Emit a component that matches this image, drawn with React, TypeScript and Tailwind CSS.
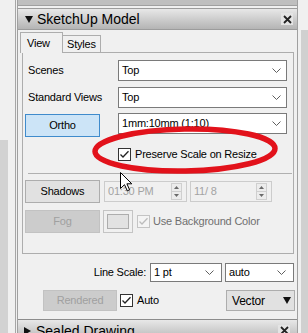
import React from "react";

const Chevron = () => (
  <svg width="9" height="5" viewBox="0 0 9 5">
    <path d="M0.5 0.5 L4.5 4.5 L8.5 0.5" fill="none" stroke="#5f5f5f" />
  </svg>
);

function Select({ value, className }: { value: string; className: string }) {
  return (
    <div className={"flex items-center justify-between bg-white border border-[#7a7a7a] pl-[3px] pr-[5px] " + className}>
      <span>{value}</span>
      <Chevron />
    </div>
  );
}

function Check({ disabled }: { disabled?: boolean }) {
  const c = disabled ? "#bcbcbc" : "#222";
  return (
    <svg width="13" height="13" viewBox="0 0 13 13" className="shrink-0">
      <rect x="0.5" y="0.5" width="12" height="12" fill={disabled ? "#f4f4f4" : "#fff"} stroke={disabled ? "#c4c4c4" : "#333"} />
      <path d="M2.5 6.5 L5 9 L10.5 3.2" fill="none" stroke={c} strokeWidth="1.3" />
    </svg>
  );
}

function Spin({ value, className }: { value: string; className: string }) {
  return (
    <div className={"flex items-center justify-between border border-[#cccccc] bg-[#f0f0f0] text-[#a3a3a3] pl-[3px] pr-[4px] " + className}>
      <span>{value}</span>
      <div className="w-[11px] h-[17px] border border-[#cfcfcf] bg-[#ececec] flex flex-col">
        <div className="flex-1 flex items-center justify-center border-b border-[#cfcfcf]">
          <svg width="5" height="3" viewBox="0 0 5 3"><path d="M0 3 L2.5 0 L5 3 Z" fill="#6a6a6a" /></svg>
        </div>
        <div className="flex-1 flex items-center justify-center">
          <svg width="5" height="3" viewBox="0 0 5 3"><path d="M0 0 L2.5 3 L5 0 Z" fill="#6a6a6a" /></svg>
        </div>
      </div>
    </div>
  );
}

function CloseBox() {
  return (
    <div className="w-[12px] h-[12px] bg-[#e4e4e4] flex items-center justify-center">
      <svg width="9" height="9" viewBox="0 0 9 9">
        <path d="M1 1 L8 8 M8 1 L1 8" stroke="#222" strokeWidth="1.8" />
      </svg>
    </div>
  );
}

export default function App() {
  return (
    <div className="w-[308px] h-[333px] bg-[#f0f0f0] flex overflow-hidden relative font-['Liberation_Sans',Arial,sans-serif] text-[11px] tracking-[-0.2px] text-black leading-none">
      {/* left strip */}
      <div className="w-[15px] flex flex-col">
        <div className="h-[140px] shrink-0" />
        <div className="flex-1 w-[8px] bg-[#d2d2d2]" />
      </div>
      <div className="w-px bg-[#a6a6a6]" />
      <div className="w-px" />

      {/* panel */}
      <div className="w-[281px] flex flex-col border-x border-[#a0a0a0] overflow-hidden">
        <div className="h-[6px] shrink-0 bg-[#bfbfbf] border-b border-[#a0a0a0]" />
        <div className="h-[2px] shrink-0" />

        {/* header */}
        <div className="h-[22px] shrink-0 flex items-center bg-linear-to-b from-[#e8e8e8] to-[#b4b4b4] border-y border-[#9c9c9c]">
          <svg width="8" height="7" viewBox="0 0 8 7" className="ml-[7px]">
            <path d="M0 0 L8 0 L4 7 Z" fill="#111" />
          </svg>
          <span className="ml-[4px] text-[14px] tracking-normal">SketchUp Model</span>
          <div className="ml-auto mr-[4px]">
            <CloseBox />
          </div>
        </div>

        {/* tabs */}
        <div className="flex items-end h-[20px] shrink-0 mt-[2px] ml-[2px] relative z-10">
          <div className="w-[43px] h-[21px] -mb-px border border-b-0 border-[#adadad] bg-[#f0f0f0] pl-[6px] pt-[5px]">View</div>
          <div className="w-[38px] h-[17px] border border-l-0 border-b-0 border-[#adadad] bg-[#f0f0f0] pl-[4px] pt-[3px]">Styles</div>
        </div>

        {/* tab page */}
        <div className="ml-[4px] w-[272px] h-[202px] shrink-0 border border-[#adadad] flex flex-col">
          <div className="flex items-center mt-[7px] pl-[5px]">
            <span className="w-[90px]">Scenes</span>
            <Select value="Top" className="w-[169px] h-[21px]" />
          </div>
          <div className="flex items-center mt-[6px] pl-[5px]">
            <span className="w-[90px]">Standard Views</span>
            <Select value="Top" className="w-[169px] h-[21px]" />
          </div>
          <div className="flex items-start mt-[5px] pl-[2px]">
            <div className="w-[75px] h-[23px] mt-px flex items-center justify-center bg-[#cce4f7] border border-[#3f8bcc]">Ortho</div>
            <Select value="1mm:10mm (1:10)" className="ml-[18px] w-[169px] h-[21px]" />
          </div>
          <div className="flex items-center mt-[10px] pl-[95px] h-[14px]">
            <Check />
            <span className="ml-[4px]">Preserve Scale on Resize</span>
          </div>
          <div className="mt-[12px] ml-[5px] mr-px border-t border-[#b0b0b0]" />
          <div className="flex items-center mt-[6px] pl-[2px]">
            <div className="w-[75px] h-[23px] flex items-center justify-center bg-[#e1e1e1] border border-[#adadad]">Shadows</div>
            <Spin value="01:30 PM" className="ml-[4px] w-[83px] h-[21px]" />
            <Spin value="11/  8" className="ml-[3px] w-[82px] h-[21px]" />
          </div>
          <div className="flex items-center mt-[7px] pl-[2px]">
            <div className="w-[75px] h-[23px] flex items-center justify-center bg-[#cccccc] border border-[#c2c2c2] text-[#a0a0a0]">Fog</div>
            <div className="ml-[3px] w-[30px] h-[23px] border border-[#c4c4c4] bg-[#f0f0f0] flex items-center justify-center">
              <div className="w-[22px] h-[15px] border border-[#adadad] bg-[#e2e2e2]" />
            </div>
            <div className="ml-[4px]">
              <Check disabled />
            </div>
            <span className="ml-[3px] text-[#6f6f6f]">Use Background Color</span>
          </div>
        </div>

        {/* line scale */}
        <div className="flex items-center shrink-0 mt-[9px]">
          <span className="w-[128px] text-right">Line Scale:</span>
          <Select value="1 pt" className="ml-[4px] w-[72px] h-[19px] pr-[7px]" />
          <Select value="auto" className="ml-[3px] w-[69px] h-[19px] pr-[7px]" />
        </div>

        <div className="flex items-center shrink-0 mt-[8px]">
          <div className="ml-[25px] w-[74px] h-[21px] flex items-center justify-center bg-[#cccccc] border border-[#c2c2c2] text-[#a0a0a0]">Rendered</div>
          <div className="ml-[3px]">
            <Check />
          </div>
          <span className="ml-[4px]">Auto</span>
          <div className="ml-auto mr-[2px] w-[69px] h-[21px] flex items-center justify-between bg-[#e1e1e1] border border-[#adadad] pl-[5px] pr-[3px]">
            <span className="text-[12px]">Vector</span>
            <svg width="8" height="7" viewBox="0 0 8 7">
              <path d="M0 0 L8 0 L4 7 Z" fill="#111" />
            </svg>
          </div>
        </div>

        {/* next panel header */}
        <div className="mt-[8px] h-[22px] shrink-0 flex items-center bg-linear-to-b from-[#e8e8e8] to-[#b4b4b4] border-t border-[#8c8c8c]">
          <svg width="7" height="8" viewBox="0 0 7 8" className="ml-[6px]">
            <path d="M0 0 L7 4 L0 8 Z" fill="#111" />
          </svg>
          <span className="ml-[5px] text-[14px] tracking-normal">Sealed Drawing</span>
          <div className="ml-auto mr-[7px]">
            <CloseBox />
          </div>
        </div>
      </div>

      <div className="w-[3px]" />
      <div className="w-[7px] flex flex-col">
        <div className="h-[30px] shrink-0" />
        <div className="flex-1 bg-[#d0d0d0]" />
      </div>

      {/* red annotation ellipse */}
      <svg className="absolute left-0 top-0 pointer-events-none" width="308" height="333" viewBox="0 0 308 333">
        <ellipse cx="185" cy="150" rx="90" ry="21" fill="none" stroke="#e2121b" strokeWidth="5.5" transform="rotate(-1 185 150)" />
      </svg>

      {/* mouse cursor */}
      <svg className="absolute left-[120px] top-[172px]" width="13" height="20" viewBox="0 0 13 20">
        <path d="M0.5 0.5 L0.5 16.5 L4.5 12.7 L7.3 18.8 L9.6 17.8 L6.9 11.8 L11.8 11.8 Z" fill="#fff" stroke="#000" strokeLinejoin="round" />
      </svg>
    </div>
  );
}
